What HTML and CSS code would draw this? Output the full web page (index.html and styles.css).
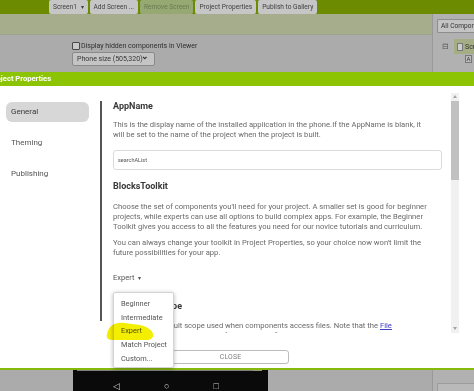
FILE: index.html
```html
<!DOCTYPE html>
<html>
<head>
<meta charset="utf-8">
<link rel="stylesheet" href="styles.css">
</head>
<body>
<div class="app">
  <div class="topline"></div>
  <div class="toolbar">
    <span class="tbtn">Screen1 <span class="caret">▾</span></span>
    <span class="tbtn">Add Screen ...</span>
    <span class="tbtn disabled">Remove Screen</span>
    <span class="tbtn">Project Properties</span>
    <span class="tbtn">Publish to Gallery</span>
  </div>
  <div class="main">
    <div class="leftcol">
      <div class="band"></div>
      <div class="viewer">
        <label class="hidden-row"><span class="cbox"></span>Display hidden components in Viewer</label>
        <div class="sizesel">Phone size (505,320) <span class="chev">⌄</span></div>
        <div class="phone-row">
          <div class="phone">
            <div class="screen-strip"><div class="strip-grey"></div><div class="strip-olive"></div></div>
            <div class="navbar"><span>◁</span><span>○</span><span>□</span></div>
          </div>
          <div class="prop-box"></div>
        </div>
      </div>
    </div>
    <div class="rightcol">
      <div class="allcomp">All Components</div>
      <div class="tree-row">
        <span class="collapse">⊟</span>
        <span class="scr-node"><span class="mini-cb"></span>Screen1</span>
      </div>
      <div class="a-node">A</div>
      <div class="lower-box"></div>
    </div>
  </div>
</div>

<div class="modal">
  <div class="modal-head">Project Properties</div>
  <div class="modal-body">
    <div class="modal-row">
      <nav class="side">
        <div class="side-item active">General</div>
        <div class="side-item">Theming</div>
        <div class="side-item">Publishing</div>
      </nav>
      <div class="divider"></div>
      <div class="scroll">
        <h3 class="ph">AppName</h3>
        <p class="pd">This is the display name of the installed application in the phone.If the AppName is blank, it will be set to the name of the project when the project is built.</p>
        <div class="field">searchAList</div>
        <h3 class="ph ph2">BlocksToolkit</h3>
        <p class="pd pd2">Choose the set of components you'll need for your project. A smaller set is good for beginner projects, while experts can use all options to build complex apps. For example, the Beginner Toolkit gives you access to all the features you need for our novice tutorials and curriculum.</p>
        <p class="pd pd3">You can always change your toolkit in Project Properties, so your choice now won't limit the future possibilities for your app.</p>
        <div class="choice">Expert <span class="caret">▾</span></div>
        <h3 class="ph ph3">DefaultFileScope</h3>
        <p class="pd pd4">Specifies the default scope used when components access files. Note that the <a class="lnk">File</a> component has its own property for controlling file access scopes.</p>
      </div>
      <div class="sbar">
        <span class="arr up"></span>
        <div class="thumb"></div>
        <span class="arr down"></span>
      </div>
    </div>
    <div class="modal-foot">
      <button class="close-btn">CLOSE</button>
    </div>
  </div>
</div>

<svg class="marker" width="50" height="22" viewBox="0 0 50 22">
  <path d="M1 13 C3 4 9 1 18 2 L34 4 C42 6 48 10 47 15 C46 20 40 19 33 19 L7 19 C1 19 0 16 1 13 Z" fill="#f4ee00"/>
</svg>

<div class="menu">
  <div class="mi">Beginner</div>
  <div class="mi">Intermediate</div>
  <div class="mi">Expert</div>
  <div class="mi">Match Project</div>
  <div class="mi">Custom...</div>
</div>
</body>
</html>
```
FILE: styles.css
```css
* { box-sizing: border-box; }
html, body { margin: 0; padding: 0; }
body {
  width: 474px; height: 391px; overflow: hidden; position: relative;
  font-family: Roboto, "Liberation Sans", sans-serif;
  background: #ababab;
}
.app { width: 474px; height: 391px; display: flex; flex-direction: column; }
.topline { height: 2px; background: #bdbdbd; }
.toolbar {
  height: 20px; background: #6c8b00; display: flex; align-items: center;
  padding-left: 49px; gap: 2px;
}
.tbtn {
  height: 14px; line-height: 14px; padding: 0 4px; background: #c6c6c6;
  color: #3e3e3e; font-size: 6.6px; border-radius: 2px; white-space: nowrap;
}
.tbtn .caret { font-size: 6px; margin-left: 2px; }
.tbtn.disabled { background: #97a972; color: #697a50; }
.main { flex: 1; display: flex; }
.leftcol { flex: 1; display: flex; flex-direction: column; }
.band { height: 21px; background: #a5ad8c; border-bottom: 1px solid #9ea38f; }
.viewer { flex: 1; background: #ababab; padding: 6px 0 0 72px; display: flex; flex-direction: column; }
.hidden-row { display: flex; align-items: center; font-size: 7px; color: #2f2f2f; height: 10px; }
.cbox { width: 8px; height: 8px; border: 1px solid #4a4a4a; border-radius: 1px; background: #c9c9c9; margin-right: 1px; }
.sizesel {
  width: 83px; height: 14px; line-height: 13px; margin-top: 1px; background: #c4c4c4;
  border: 1px solid #8a8a8a; border-radius: 2px; font-size: 7px; color: #353535; padding-left: 4px;
  position: relative;
}
.chev { position: absolute; right: 5px; top: -3px; font-size: 9px; font-weight: bold; }
.phone-row { display: flex; margin-top: 296px; margin-left: -72px; }
.phone { margin-left: 73px; width: 195px; height: 40px; background: #0a0a0a; padding: 0 6px 0 4px; }
.screen-strip { display: flex; height: 9px; }
.strip-grey { flex: 1; background: #7e7e7e; }
.strip-olive { width: 9px; background: #959d6e; }
.navbar { display: flex; gap: 44px; padding: 10px 0 0 36px; color: #cfcfcf; font-size: 9px; line-height: 10px; }
.prop-box { flex: 1; }
.rightcol { width: 42px; background: #b1b1b1; border-left: 1px solid #999; padding: 5px 0 0 4px; display: flex; flex-direction: column; }
.allcomp {
  height: 14px; line-height: 13px; background: #c4c4c4; border: 1px solid #8d8d8d; border-right: 0;
  font-size: 6.6px; color: #333; white-space: nowrap; overflow: hidden; padding-left: 3px; border-radius: 2px 0 0 2px;
}
.tree-row { display: flex; align-items: center; margin-top: 6px; height: 15px; }
.collapse { font-size: 8px; color: #555; margin-left: 5px; width: 12px; }
.scr-node {
  flex: 1; height: 15px; background: #a4ad84; display: flex; align-items: center; padding-left: 3px;
  font-size: 7px; color: #333; white-space: nowrap; overflow: hidden;
}
.mini-cb { width: 6px; height: 8px; border: 1px solid #777; background: #ccc; margin-right: 2px; flex: none; }
.a-node {
  margin: 1px 0 0 28px; width: 7px; height: 8px; border: 1px solid #777; font-size: 6px; line-height: 6px;
  color: #333; text-align: center; background: #bbb;
}
.lower-box { margin-top: auto; height: 19px; background: #b9b9b9; border-top: 1px solid #9c9c9c; border-left: 1px solid #9c9c9c; }

/* Modal */
.modal {
  position: absolute; left: 0; top: 72px; width: 474px; height: 298px;
  background: #fff; border-bottom: 2px solid #86b80e;
  display: flex; flex-direction: column;
}
.modal-head {
  height: 14px; background: #8cc404; color: #fff; font-weight: bold; font-size: 7.6px;
  line-height: 14px; text-indent: -11px; white-space: nowrap; overflow: hidden;
}
.modal-body { flex: 1; display: flex; flex-direction: column; }
.modal-row { display: flex; align-items: flex-start; height: 247px; padding-left: 6px; }
.side { width: 83px; margin-top: 16px; }
.side-item {
  height: 20px; line-height: 20px; padding-left: 5px; font-size: 8px; color: #555;
  border-radius: 6px; margin-bottom: 11px;
}
.side-item.active { background: #d7d7d7; color: #3a3a3a; }
.divider { width: 2px; height: 220px; background: #555; margin: 15px 0 0 11px; }
.scroll { width: 329px; height: 240px; margin: 7px 0 0 11px; overflow: hidden; }
.ph { margin: 6px 0 0; font-size: 9px; line-height: 14px; font-weight: bold; color: #383838; }
.ph2 { margin-top: 9px; }
.ph3 { margin-top: 16px; }
.pd { margin: 7px 0 0; width: 316px; font-size: 7.65px; line-height: 10px; color: #6a6a6a; }
.pd2 { margin-top: 9px; width: 329px; }
.pd3 { margin-top: 6px; }
.pd4 { margin-top: 8px; }
.lnk { color: #3d3dc8; text-decoration: underline; }
.field {
  margin-top: 10px; height: 20px; border: 1px solid #dadada; border-radius: 3px;
  font-size: 5.5px; color: #555; line-height: 18px; padding-left: 4px;
}
.choice { margin-top: 15px; font-size: 7.5px; line-height: 10px; color: #555; }
.choice .caret { font-size: 6px; margin-left: 2px; }
.sbar {
  width: 8px; height: 240px; margin: 7px 0 0 9px; background: #f1f1f1; position: relative;
  display: flex; flex-direction: column; align-items: center;
}
.arr { width: 0; height: 0; border-left: 2px solid transparent; border-right: 2px solid transparent; }
.arr.up { border-bottom: 3px solid #a3a3a3; margin-top: 2px; }
.arr.down { border-top: 3px solid #a3a3a3; margin-top: auto; margin-bottom: 3px; }
.thumb { width: 8px; height: 79px; background: #c1c1c1; margin-top: 3px; }
.modal-foot { padding: 17px 0 0 172px; }
.close-btn {
  width: 117px; height: 14px; padding: 0; background: #fff; border: 1px solid #bcbcbc; border-radius: 3px;
  font-family: Roboto, "Liberation Sans", sans-serif; font-size: 6.8px; color: #7a7a7a; letter-spacing: .2px;
  display: block;
}

/* Highlighter stroke (drawn over the screenshot) */
.marker { position: absolute; left: 106px; top: 321px; mix-blend-mode: multiply; z-index: 3; }

/* Dropdown menu */
.menu {
  position: absolute; left: 113px; top: 292px; width: 61px; height: 76px; background: #fff;
  border: 1px solid #d4d4d4; border-radius: 2px; box-shadow: 0 1px 4px rgba(0,0,0,.28);
  padding: 4px 0 0 7px; z-index: 2;
}
.mi { height: 13.7px; line-height: 13.7px; font-size: 7.4px; color: #555; white-space: nowrap; }
```
